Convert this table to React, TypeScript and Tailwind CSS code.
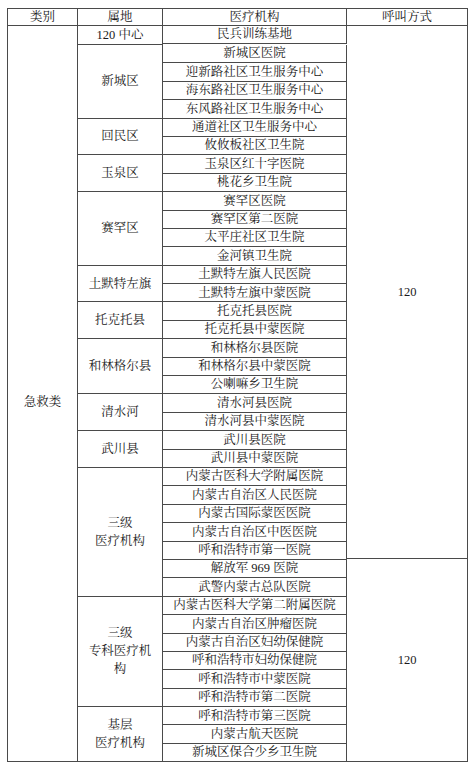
import React from "react";

type Group = { name: string[]; items: string[] };

const groups: Group[] = [
  { name: ["120 中心"], items: ["民兵训练基地"] },
  {
    name: ["新城区"],
    items: ["新城区医院", "迎新路社区卫生服务中心", "海东路社区卫生服务中心", "东风路社区卫生服务中心"],
  },
  { name: ["回民区"], items: ["通道社区卫生服务中心", "攸攸板社区卫生院"] },
  { name: ["玉泉区"], items: ["玉泉区红十字医院", "桃花乡卫生院"] },
  { name: ["赛罕区"], items: ["赛罕区医院", "赛罕区第二医院", "太平庄社区卫生院", "金河镇卫生院"] },
  { name: ["土默特左旗"], items: ["土默特左旗人民医院", "土默特左旗中蒙医院"] },
  { name: ["托克托县"], items: ["托克托县医院", "托克托县中蒙医院"] },
  { name: ["和林格尔县"], items: ["和林格尔县医院", "和林格尔县中蒙医院", "公喇嘛乡卫生院"] },
  { name: ["清水河"], items: ["清水河县医院", "清水河县中蒙医院"] },
  { name: ["武川县"], items: ["武川县医院", "武川县中蒙医院"] },
  {
    name: ["三级", "医疗机构"],
    items: [
      "内蒙古医科大学附属医院",
      "内蒙古自治区人民医院",
      "内蒙古国际蒙医医院",
      "内蒙古自治区中医医院",
      "呼和浩特市第一医院",
      "解放军 969 医院",
      "武警内蒙古总队医院",
    ],
  },
  {
    name: ["三级", "专科医疗机", "构"],
    items: [
      "内蒙古医科大学第二附属医院",
      "内蒙古自治区肿瘤医院",
      "内蒙古自治区妇幼保健院",
      "呼和浩特市妇幼保健院",
      "呼和浩特市中蒙医院",
      "呼和浩特市第二医院",
    ],
  },
  { name: ["基层", "医疗机构"], items: ["呼和浩特市第三医院", "内蒙古航天医院", "新城区保合少乡卫生院"] },
];

const font = {
  fontFamily: '"Liberation Serif", "Noto Serif CJK SC", "Noto Sans CJK SC", serif',
};

export default function App() {
  return (
    <div className="bg-white w-[474px] h-[769px] pt-[8px] pl-[7px] text-[#1a1a1a] text-[12.5px]" style={font}>
      <div className="w-[461px] border-l border-t border-[#4a4a4a]">
        {/* header */}
        <div className="flex h-[17px]">
          <div className="w-[70px] border-r border-b border-[#4a4a4a] flex items-center justify-center leading-none">类别</div>
          <div className="w-[85px] border-r border-b border-[#4a4a4a] flex items-center justify-center leading-none">属地</div>
          <div className="w-[184px] border-r border-b border-[#4a4a4a] flex items-center justify-center leading-none">医疗机构</div>
          <div className="w-[121px] border-r border-b border-[#4a4a4a] flex items-center justify-center leading-none">呼叫方式</div>
        </div>
        {/* body */}
        <div className="flex">
          <div className="w-[70px] border-r border-b border-[#4a4a4a] flex items-center justify-center pt-[18px]">急救类</div>
          <div className="w-[269px] flex flex-col">
            {groups.map((g, gi) => (
              <div key={gi} className="flex">
                <div className="w-[85px] border-r border-b border-[#4a4a4a] flex flex-col items-center justify-center leading-[18px]">
                  {g.name.map((n, ni) => (
                    <span key={ni}>{n}</span>
                  ))}
                </div>
                <div className="w-[184px] flex flex-col">
                  {g.items.map((it, ii) => (
                    <div
                      key={ii}
                      className="h-[18.4px] border-r border-b border-[#4a4a4a] flex items-center justify-center leading-none whitespace-nowrap"
                    >
                      {it}
                    </div>
                  ))}
                </div>
              </div>
            ))}
          </div>
          <div className="w-[121px] flex flex-col">
            <div className="grow-[29] basis-0 border-r border-b border-[#4a4a4a] flex items-center justify-center">120</div>
            <div className="grow-[11] basis-0 border-r border-b border-[#4a4a4a] flex items-center justify-center">120</div>
          </div>
        </div>
      </div>
    </div>
  );
}
